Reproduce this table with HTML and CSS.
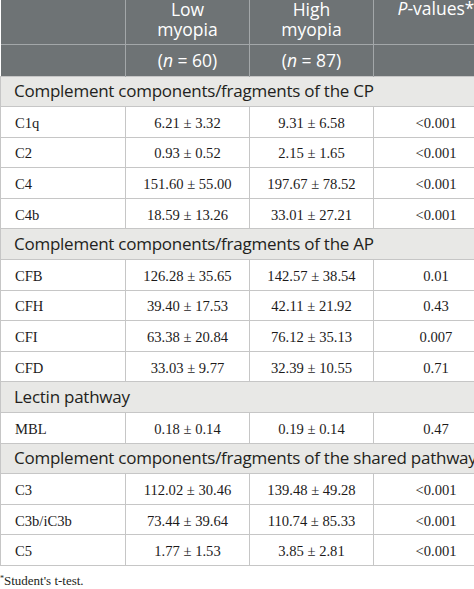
FILE: index.html
```html
<!DOCTYPE html>
<html>
<head>
<meta charset="utf-8">
<link rel="stylesheet" href="styles.css">
</head>
<body>
<table class="tbl">
  <colgroup>
    <col class="c1"><col class="c2"><col class="c3"><col class="c4">
  </colgroup>
  <thead>
    <tr class="h1">
      <th></th>
      <th>Low<br>myopia</th>
      <th>High<br>myopia</th>
      <th class="pv"><i>P</i>-values*</th>
    </tr>
    <tr class="h2">
      <th></th>
      <th>(<i>n</i> = 60)</th>
      <th>(<i>n</i> = 87)</th>
      <th></th>
    </tr>
  </thead>
  <tbody>
    <tr class="sec"><td colspan="4">Complement components/fragments of the CP</td></tr>
    <tr><td>C1q</td><td>6.21 ± 3.32</td><td>9.31 ± 6.58</td><td>&lt;0.001</td></tr>
    <tr><td>C2</td><td>0.93 ± 0.52</td><td>2.15 ± 1.65</td><td>&lt;0.001</td></tr>
    <tr><td>C4</td><td>151.60 ± 55.00</td><td>197.67 ± 78.52</td><td>&lt;0.001</td></tr>
    <tr><td>C4b</td><td>18.59 ± 13.26</td><td>33.01 ± 27.21</td><td>&lt;0.001</td></tr>
    <tr class="sec"><td colspan="4">Complement components/fragments of the AP</td></tr>
    <tr><td>CFB</td><td>126.28 ± 35.65</td><td>142.57 ± 38.54</td><td>0.01</td></tr>
    <tr><td>CFH</td><td>39.40 ± 17.53</td><td>42.11 ± 21.92</td><td>0.43</td></tr>
    <tr><td>CFI</td><td>63.38 ± 20.84</td><td>76.12 ± 35.13</td><td>0.007</td></tr>
    <tr><td>CFD</td><td>33.03 ± 9.77</td><td>32.39 ± 10.55</td><td>0.71</td></tr>
    <tr class="sec"><td colspan="4">Lectin pathway</td></tr>
    <tr><td>MBL</td><td>0.18 ± 0.14</td><td>0.19 ± 0.14</td><td>0.47</td></tr>
    <tr class="sec"><td colspan="4">Complement components/fragments of the shared pathway</td></tr>
    <tr><td>C3</td><td>112.02 ± 30.46</td><td>139.48 ± 49.28</td><td>&lt;0.001</td></tr>
    <tr><td>C3b/iC3b</td><td>73.44 ± 39.64</td><td>110.74 ± 85.33</td><td>&lt;0.001</td></tr>
    <tr><td>C5</td><td>1.77 ± 1.53</td><td>3.85 ± 2.81</td><td>&lt;0.001</td></tr>
  </tbody>
</table>
<p class="note"><sup>*</sup>Student's t-test.</p>
</body>
</html>
```

FILE: styles.css
```css
html, body {
  margin: 0;
  padding: 0;
  background: #ffffff;
  overflow: hidden;
  width: 474px;
  height: 589px;
}

.tbl {
  border-collapse: collapse;
  table-layout: fixed;
  width: 498px;
  margin-top: -3px;
  font-family: "Liberation Serif", "Times New Roman", serif;
  font-size: 14.6px;
  color: #1c1a1a;
}

.c1 { width: 125px; }
.c2 { width: 124px; }
.c3 { width: 124px; }
.c4 { width: 125px; }

.tbl th {
  background: #6e7375;
  color: #ffffff;
  font-family: "Open Sans", sans-serif;
  font-weight: 400;
  font-size: 17.5px;
  line-height: 20px;
  text-align: center;
  border: 1px solid #a3a7a9;
  border-top: none;
  padding: 0;
  white-space: nowrap;
}

.tbl th:first-child { border-left: none; }

.h1 th {
  height: 47px;
  vertical-align: bottom;
  padding-bottom: 5px;
  box-sizing: border-box;
}

.h1 th.pv {
  vertical-align: top;
  padding-top: 1px;
}

.h2 th {
  height: 31px;
  vertical-align: middle;
  border-bottom: none;
}

.tbl td {
  height: 30.6px;
  box-sizing: border-box;
  border: 1px solid #c6c6c6;
  padding: 2px 0 0 0;
  text-align: center;
  vertical-align: middle;
  line-height: 20px;
  white-space: nowrap;
}

.tbl td:first-child {
  text-align: left;
  padding-left: 14px;
}

.sec td {
  background: #e8e8e6;
  font-family: "Open Sans", sans-serif;
  font-size: 17px;
  letter-spacing: -0.25px;
  color: #231f20;
  padding: 0 0 0 13px !important;
}

.note {
  margin: 7px 0 0 0;
  font-family: "Liberation Serif", "Times New Roman", serif;
  font-size: 13px;
  line-height: 15px;
  color: #231f20;
}

.note sup {
  font-size: 8px;
  vertical-align: 4px;
  line-height: 0;
}
```
